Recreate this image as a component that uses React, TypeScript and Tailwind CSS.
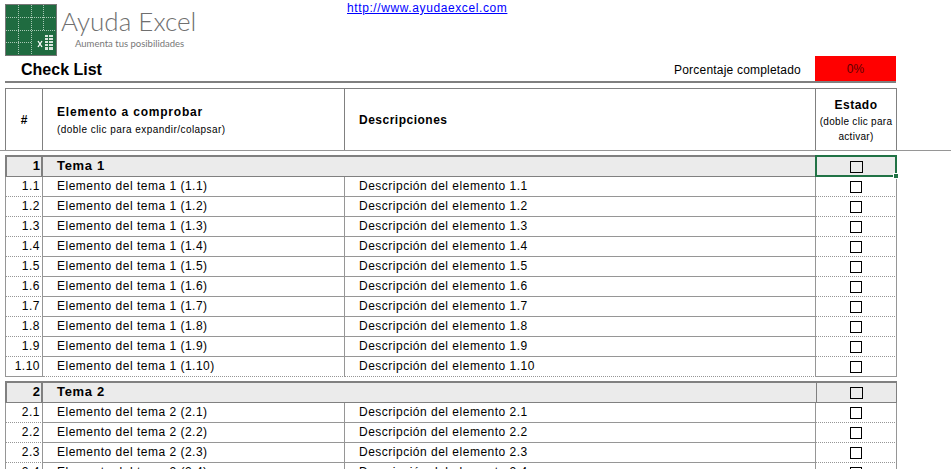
const cols = "ml-[5px] grid w-[892px] grid-cols-[38px_302px_471px_81px]";

function Box({ dark }: { dark?: boolean }) {
  return <span className={`block h-[12px] ${dark ? "w-[13px]" : "w-[12px]"} border border-black`} />;
}

function Logo() {
  return (
    <svg width="52" height="52" viewBox="0 0 52 52" className="block">
      <rect x="0.5" y="0.5" width="51" height="51" fill="#1f6b40" stroke="#777" />
      {[13.5, 26.5, 38.5].map((x) => (
        <line key={x} x1={x} y1="1" x2={x} y2="51" stroke="#a9c9b5" strokeDasharray="1 1" />
      ))}
      {[13.5, 26.5, 38.5].map((y) => (
        <line key={y} x1="1" y1={y} x2="51" y2={y} stroke="#a9c9b5" strokeDasharray="1 1" />
      ))}
      <rect x="27" y="27" width="24" height="24" fill="#1f6b40" />
      <path d="M33 37l4 6M37 37l-4 6" stroke="#fff" strokeWidth="1.3" fill="none" />
      <rect x="40" y="31" width="8" height="15" fill="#d9e7de" />
      {[33, 36, 39, 42].map((y) => (
        <line key={y} x1="40" x2="48" y1={y + 0.5} y2={y + 0.5} stroke="#1f6b40" />
      ))}
      <line x1="43.5" y1="31" x2="43.5" y2="46" stroke="#1f6b40" />
    </svg>
  );
}

function GroupRow({ n, name, selected }: { n: string; name: string; selected?: boolean }) {
  return (
    <div className={`${cols} h-[22px] border-t-2 border-[#808080] bg-[#ebebeb] text-[13px] leading-[15px] font-bold text-black`}>
      <div className="flex items-center justify-end border-x-2 border-b border-x-[#808080] border-b-[#808080] pr-[1px] pb-[2px]">{n}</div>
      <div className="col-span-2 flex items-center border-b border-[#808080] pl-[14px] pb-[2px] tracking-[0.7px]">{name}</div>
      <div className="relative flex items-center justify-center border-x border-b border-[#808080]">
        <Box dark />
        {selected && (
          <div className="absolute -top-[2px] -right-[1px] -bottom-[1px] -left-[2px] border-2 border-[#217346]">
            <span className="absolute -right-[4px] -bottom-[4px] h-[6px] w-[6px] border border-white bg-[#217346]" />
          </div>
        )}
      </div>
    </div>
  );
}

function ItemRow({ n, name, desc, last }: { n: string; name: string; desc: string; last?: boolean }) {
  const inner = last ? "[border-bottom-style:dotted]" : "";
  const outer = last ? "" : "[border-bottom-style:dotted]";
  return (
    <div className={`${cols} h-[20px] text-[12px] leading-[14px] text-black`}>
      <div className={`flex items-center justify-end border-x border-b border-[#969696] pr-[2px] pb-[2px] tracking-[0.5px] ${outer}`}>{n}</div>
      <div className={`flex items-center border-r border-b border-[#969696] pl-[14px] pb-[2px] tracking-[0.5px] ${inner}`}>{name}</div>
      <div className={`flex items-center border-r border-b border-[#969696] pl-[14px] pb-[2px] tracking-[0.5px] ${inner}`}>{desc}</div>
      <div className={`flex items-center justify-center border-r border-b border-[#969696] ${outer}`}>
        <Box />
      </div>
    </div>
  );
}

const items = (g: number, count: number) =>
  Array.from({ length: count }, (_, i) => `${g}.${i + 1}`);

export default function App() {
  return (
    <div className="h-[469px] w-[951px] overflow-hidden bg-white font-['Liberation_Sans',Arial,sans-serif] text-black">
      <div className="flex h-[56px]">
        <div className="ml-[5px] mt-[4px]">
          <Logo />
        </div>
        <div className="ml-[4px] w-[280px] shrink-0">
          <div className="mt-[4px] font-['Lato',sans-serif] text-[26px] leading-[34px] font-light text-[#6f6f6f]">Ayuda Excel</div>
          <div className="ml-[14px] font-['Lato',sans-serif] text-[9.5px] leading-[12px] text-[#777]">Aumenta tus posibilidades</div>
        </div>
        <a href="#" className="ml-[6px] h-[16px] text-[12px] leading-[16px] tracking-[0.6px] text-[#0000ff] underline">
          http://www.ayudaexcel.com
        </a>
      </div>

      <div className="ml-[5px] flex h-[27px] w-[891px] items-center border-b-2 border-[#808080]">
        <div className="ml-[16px] mt-[2px] text-[16px] font-bold">Check List</div>
        <div className="ml-auto mr-[14px] mt-[2px] text-[12px] tracking-[0.2px]">Porcentaje completado</div>
        <div className="flex h-[25px] w-[81px] items-center justify-center bg-[#ff0000] text-[12px] text-[#600000]">0%</div>
      </div>

      <div className="mt-[5px] border-b border-[#969696]">
        <div className={`${cols} h-[62px] text-black`}>
          <div className="flex items-center justify-center border-x border-t border-[#808080] text-[12px] font-bold">#</div>
          <div className="flex flex-col justify-center border-t border-r border-[#808080] pl-[14px]">
            <div className="mt-[1px] text-[12px] leading-[18px] font-bold tracking-[0.8px]">Elemento a comprobar</div>
            <div className="mt-[1px] text-[10px] leading-[16px] tracking-[0.45px]">(doble clic para expandir/colapsar)</div>
          </div>
          <div className="flex items-center border-t border-r border-[#808080] pl-[14px] text-[12px] font-bold tracking-[0.5px]">Descripciones</div>
          <div className="flex flex-col items-center justify-center border-t border-r border-[#808080] pt-[2px] text-center">
            <div className="text-[12px] leading-[17px] font-bold tracking-[0.5px]">Estado</div>
            <div className="text-[10px] leading-[15px] tracking-[0.3px]">(doble clic para activar)</div>
          </div>
        </div>
      </div>

      <div className="mt-[4px]">
        <GroupRow n="1" name="Tema 1" selected />
        {items(1, 10).map((n, i) => (
          <ItemRow key={n} n={n} name={`Elemento del tema 1 (${n})`} desc={`Descripción del elemento ${n}`} last={i === 9} />
        ))}
      </div>

      <div className="mt-[4px]">
        <GroupRow n="2" name="Tema 2" />
        {items(2, 5).map((n) => (
          <ItemRow key={n} n={n} name={`Elemento del tema 2 (${n})`} desc={`Descripción del elemento ${n}`} />
        ))}
      </div>
    </div>
  );
}
